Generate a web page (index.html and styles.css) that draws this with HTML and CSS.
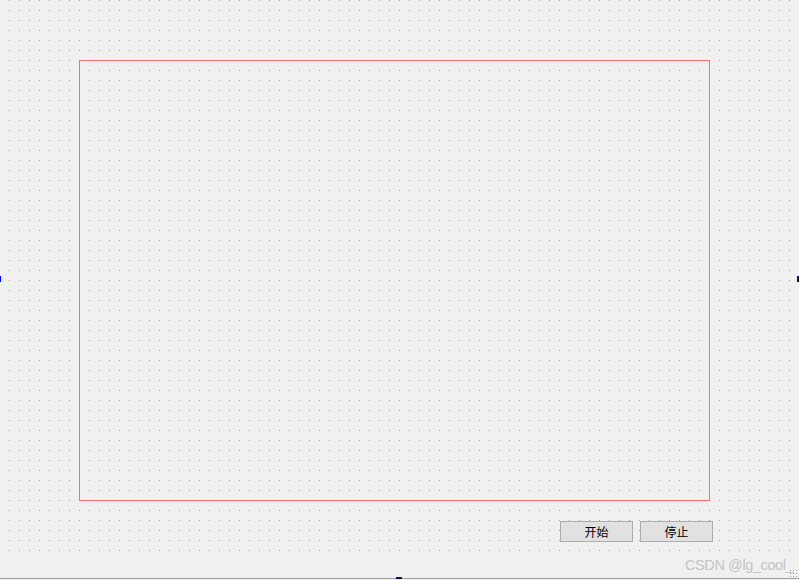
FILE: index.html
```html
<!DOCTYPE html>
<html lang="zh-CN">
<head>
  <meta charset="UTF-8" />
  <meta name="viewport" content="width=device-width, initial-scale=1.0"/>
  <title>Form</title>
  <link rel="stylesheet" href="styles.css">
</head>
<body>

  <div class="form">
    <div class="grid">
      <div class="view"></div>
      <div class="botones">
        <button class="btn">开始</button>
        <button class="btn">停止</button>
      </div>
    </div>

    <span class="handle left"></span>
    <span class="handle right"></span>
    <span class="handle bottom"></span>
    <span class="grip"></span>
    <div class="marca">CSDN @lg_cool_</div>
  </div>

</body>
</html>
```

FILE: styles.css
```css
/* Ventana de diseño con rejilla de puntos */
body {
  margin: 0;
  padding: 0;
  background: #f0f0f0;
  font-family: "Liberation Sans", "Noto Sans CJK SC", sans-serif;
  overflow: hidden;
}

.form {
  position: relative;
  width: 799px;
  height: 578px;
  border-bottom: 1px solid #a0a0a0;
  background: #f0f0f0;
}

.grid {
  height: 556px;
  background-color: #a4a4a4;
  background-image:
    linear-gradient(to bottom, transparent 1px, #f0f0f0 1px),
    linear-gradient(to right, transparent 1px, #f0f0f0 1px);
  background-size: 10px 10px;
  background-position: 9px 0;
  padding-top: 60px;
  box-sizing: border-box;
}

.view {
  margin-left: 79px;
  width: 631px;
  height: 441px;
  border: 1px solid #ff6a6a;
  box-sizing: border-box;
}

.botones {
  display: flex;
  justify-content: flex-end;
  gap: 7px;
  margin-top: 20px;
  padding-right: 86px;
}

.btn {
  width: 73px;
  height: 21px;
  padding: 0;
  background: #e1e1e1;
  border: 1px solid #adadad;
  border-radius: 0;
  font-family: "Noto Sans CJK SC", sans-serif;
  font-size: 12px;
  color: #000;
  line-height: 19px;
}

.handle {
  position: absolute;
  width: 6px;
  height: 6px;
  background: #000;
  border: 1px solid #0000ff;
  box-sizing: border-box;
}

.handle.left {
  left: -5px;
  top: 276px;
}

.handle.right {
  left: 797px;
  top: 276px;
}

.handle.bottom {
  left: 396px;
  top: 577px;
}

.grip {
  position: absolute;
  right: 2px;
  bottom: 1px;
  width: 8px;
  height: 8px;
  background-image: radial-gradient(circle, #9c9c9c 0.8px, transparent 1px);
  background-size: 3px 3px;
}

.marca {
  position: absolute;
  left: 685px;
  top: 557px;
  font-size: 14.5px;
  letter-spacing: -0.4px;
  color: #c4c4c4;
}
```
